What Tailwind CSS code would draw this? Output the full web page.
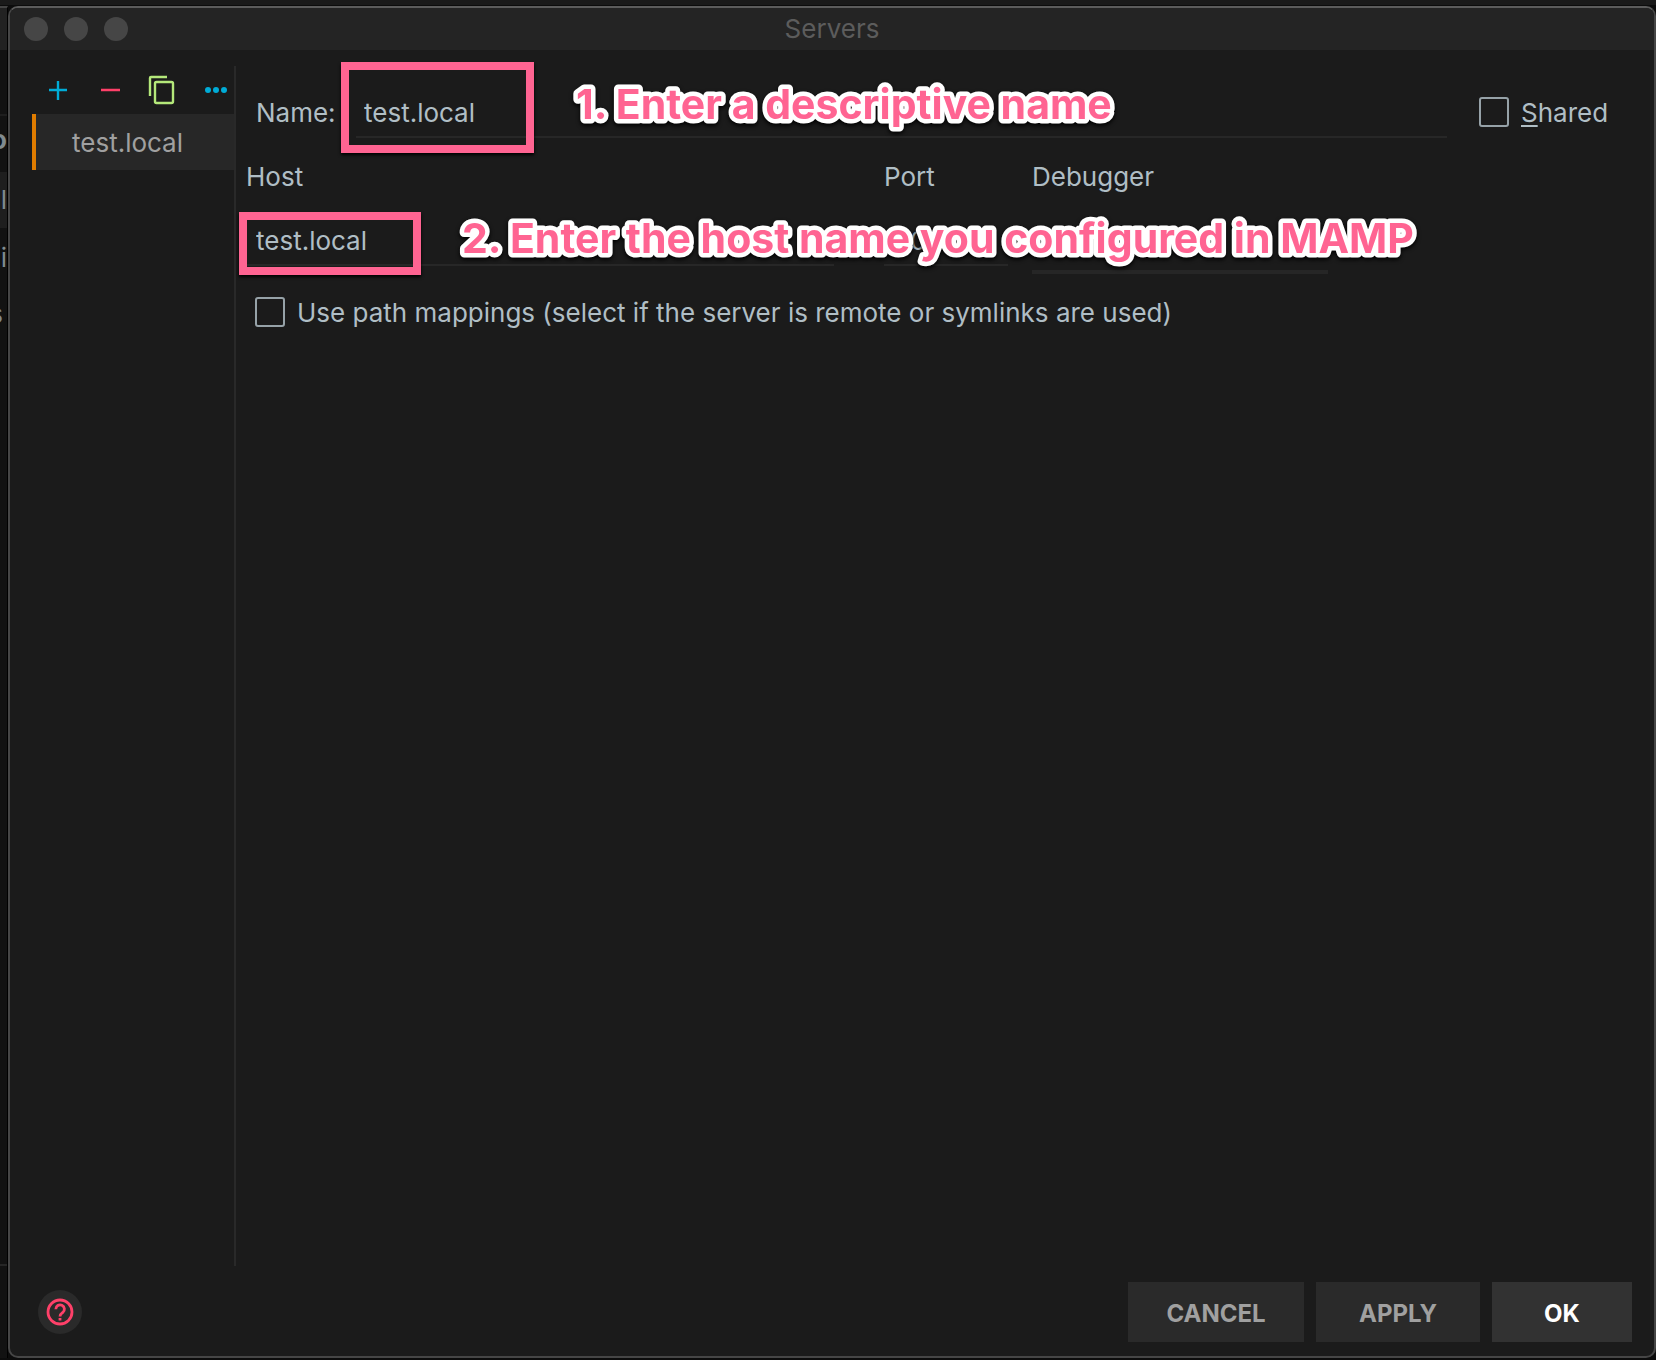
<!DOCTYPE html>
<html lang="en">
<head>
<meta charset="utf-8">
<title>Servers</title>
<script src="https://cdn.jsdelivr.net/npm/@tailwindcss/browser@4"></script>
</head>
<body class="flex min-h-screen flex-col bg-[#0c0c0c] font-[Inter,sans-serif] text-[26px] leading-8 text-[#b0bec5]">
  <div class="h-[5px] shrink-0 bg-[#1a1a1a]"></div>
  <div class="flex flex-1 pt-px pb-0.5">
    <!-- Edge of the window behind the dialog -->
    <aside class="flex w-2 shrink-0 flex-col overflow-hidden border-t-2 border-r border-t-[#444] border-r-black bg-[#121212] text-[#808a8f]" aria-hidden="true">
      <div class="h-[42px] shrink-0 bg-[#222]"></div>
      <div class="h-[66px] shrink-0 border-b-2 border-[#1e1e1e]"></div>
      <div class="flex h-14 shrink-0 items-center justify-end pb-2 font-bold"><span>o</span></div>
      <div class="flex h-14 shrink-0 items-center justify-end bg-[#1e1e1e]"><span>l</span></div>
      <div class="flex h-14 shrink-0 items-center justify-end pt-1"><span>si</span></div>
      <div class="flex h-14 shrink-0 items-center justify-end pt-1 pr-1"><span>s</span></div>
      <div class="flex-1 border-b-2 border-[#262626]"></div>
      <div class="h-[92px] shrink-0"></div>
    </aside>

    <!-- Dialog -->
    <div class="flex min-w-0 flex-1 flex-col overflow-hidden rounded-[10px] border-2 border-[#464646] border-t-[#5c5c5c] bg-[#1b1b1b]">
      <header class="grid h-[42px] shrink-0 grid-cols-[1fr_auto_1fr] items-center bg-[#242424] px-3.5">
        <div class="flex gap-4">
          <button aria-label="Close" class="size-6 rounded-full bg-[#464646]"></button>
          <button aria-label="Minimize" class="size-6 rounded-full bg-[#464646]"></button>
          <button aria-label="Zoom" class="size-6 rounded-full bg-[#464646]"></button>
        </div>
        <h1 class="text-[#5c5c5c]">Servers</h1>
      </header>

      <div class="flex flex-1 pt-4">
        <nav class="w-[226px] shrink-0 border-r-2 border-[#292929] pl-[22px]">
          <div class="flex h-12 items-center gap-6 pl-3">
            <button aria-label="Add"><svg class="size-7" viewBox="0 0 28 28" fill="none" stroke="#00acd7" stroke-width="2.4"><path d="M14 5v19M5 14h18"/></svg></button>
            <button aria-label="Remove"><svg class="size-7" viewBox="0 0 28 28"><path d="M5 14h19" stroke="#ff4069" stroke-width="2.6"/></svg></button>
            <button aria-label="Copy"><svg class="h-8 w-7" viewBox="0 0 28 32" fill="none" stroke="#b4e87a" stroke-width="2.4"><path d="M2 22V4a1 1 0 0 1 1-1h16"/><rect x="7" y="8" width="18" height="21" rx="1.5"/></svg></button>
            <button aria-label="More"><svg class="size-7" viewBox="0 0 28 28" fill="#00acd7"><circle cx="8" cy="14" r="3"/><circle cx="16" cy="14" r="3"/><circle cx="24" cy="14" r="3"/></svg></button>
          </div>
          <a href="#" class="flex h-14 items-center border-l-4 border-[#e07c00] bg-[#272727] pt-0.5 pl-9 text-[#a0a0a0]">test.local</a>
        </nav>

        <main class="relative min-w-0 flex-1 pt-[23px]">
          <div class="flex items-start pr-[47px] pl-5">
            <label for="name" class="w-[100px] shrink-0 pt-2">Name:</label>
            <input id="name" value="test.local" class="h-[49px] min-w-0 flex-1 border-b-2 border-[#272727] bg-transparent px-2 outline-none">
            <label class="ml-8 flex w-32 shrink-0 items-start gap-3 pt-2">
              <input type="checkbox" class="size-[30px] shrink-0 appearance-none rounded-[3px] border-2 border-[#96a2a8]">
              <span><span class="underline decoration-2 underline-offset-3">S</span>hared</span>
            </label>
          </div>

          <div class="mt-[23px] grid grid-cols-[638fr_148fr_622fr] gap-y-6 pl-2.5">
            <label for="host">Host</label>
            <label for="port">Port</label>
            <label for="debugger">Debugger</label>
            <div class="pr-[50px]"><input id="host" value="test.local" class="h-[49px] w-full border-b-2 border-[#272727] bg-transparent px-2.5 outline-none"></div>
            <div class="pr-6"><input id="port" value="80" class="h-[49px] w-full border-b-2 border-[#272727] bg-transparent px-2.5 outline-none"></div>
            <select id="debugger" class="h-[57px] w-[296px] appearance-none border-b-4 border-[#262626] bg-transparent px-2 outline-none"><option></option></select>
          </div>

          <label class="mt-[23px] flex items-start gap-3 pl-[19px]">
            <input type="checkbox" class="size-[30px] shrink-0 appearance-none rounded-[3px] border-2 border-[#96a2a8]">
            Use path mappings (select if the server is remote or symlinks are used)
          </label>

          <!-- Tutorial callouts laid over the form -->
          <div class="pointer-events-none absolute top-[-4px] left-[105px] h-[91px] w-[193px] border-8 border-[#ff6492] shadow-[0_2px_3px_black]"></div>
          <div class="pointer-events-none absolute top-[146px] left-[3px] h-[63px] w-[182px] border-8 border-[#ff6492] shadow-[0_2px_3px_black]"></div>
          <svg class="pointer-events-none absolute top-[13px] left-[332px] h-14 w-[600px] drop-shadow-[0_2px_2px_black]">
            <text x="8" y="40" class="fill-[#ff6492] stroke-white stroke-[9px] text-[41px] font-bold [paint-order:stroke] [stroke-linejoin:round]">1. Enter a descriptive name</text>
          </svg>
          <svg class="pointer-events-none absolute top-[147px] left-[218px] h-14 w-[980px] drop-shadow-[0_2px_2px_black]">
            <text x="8" y="40" class="fill-[#ff6492] stroke-white stroke-[9px] text-[41px] font-bold [paint-order:stroke] [stroke-linejoin:round]">2. Enter the host name you configured in MAMP</text>
          </svg>
        </main>
      </div>

      <footer class="flex h-[90px] shrink-0 items-center gap-3 pr-[22px] pb-3.5 pt-4 pl-7 font-bold text-[#a0a0a0]">
        <button aria-label="Help" class="mr-auto flex size-11 items-center justify-center rounded-full bg-[#2a2a2a]">
          <svg class="size-7" viewBox="0 0 28 28" fill="none" stroke="#ff4069" stroke-width="2.8"><circle cx="14" cy="14" r="12"/><path d="M9.800 11.200a4.300 4.300 0 1 1 7 3.300c-1.800 1.300-2.800 1.900-2.800 4"/><path d="M14 20v2.600"/></svg>
        </button>
        <button class="h-15 w-44 bg-[#2a2a2a] pt-1 text-2xl">CANCEL</button>
        <button class="h-15 w-41 bg-[#2a2a2a] pt-1 text-2xl">APPLY</button>
        <button class="h-15 w-35 bg-[#323232] pt-1 text-2xl text-white">OK</button>
      </footer>
    </div>
  </div>
</body>
</html>
